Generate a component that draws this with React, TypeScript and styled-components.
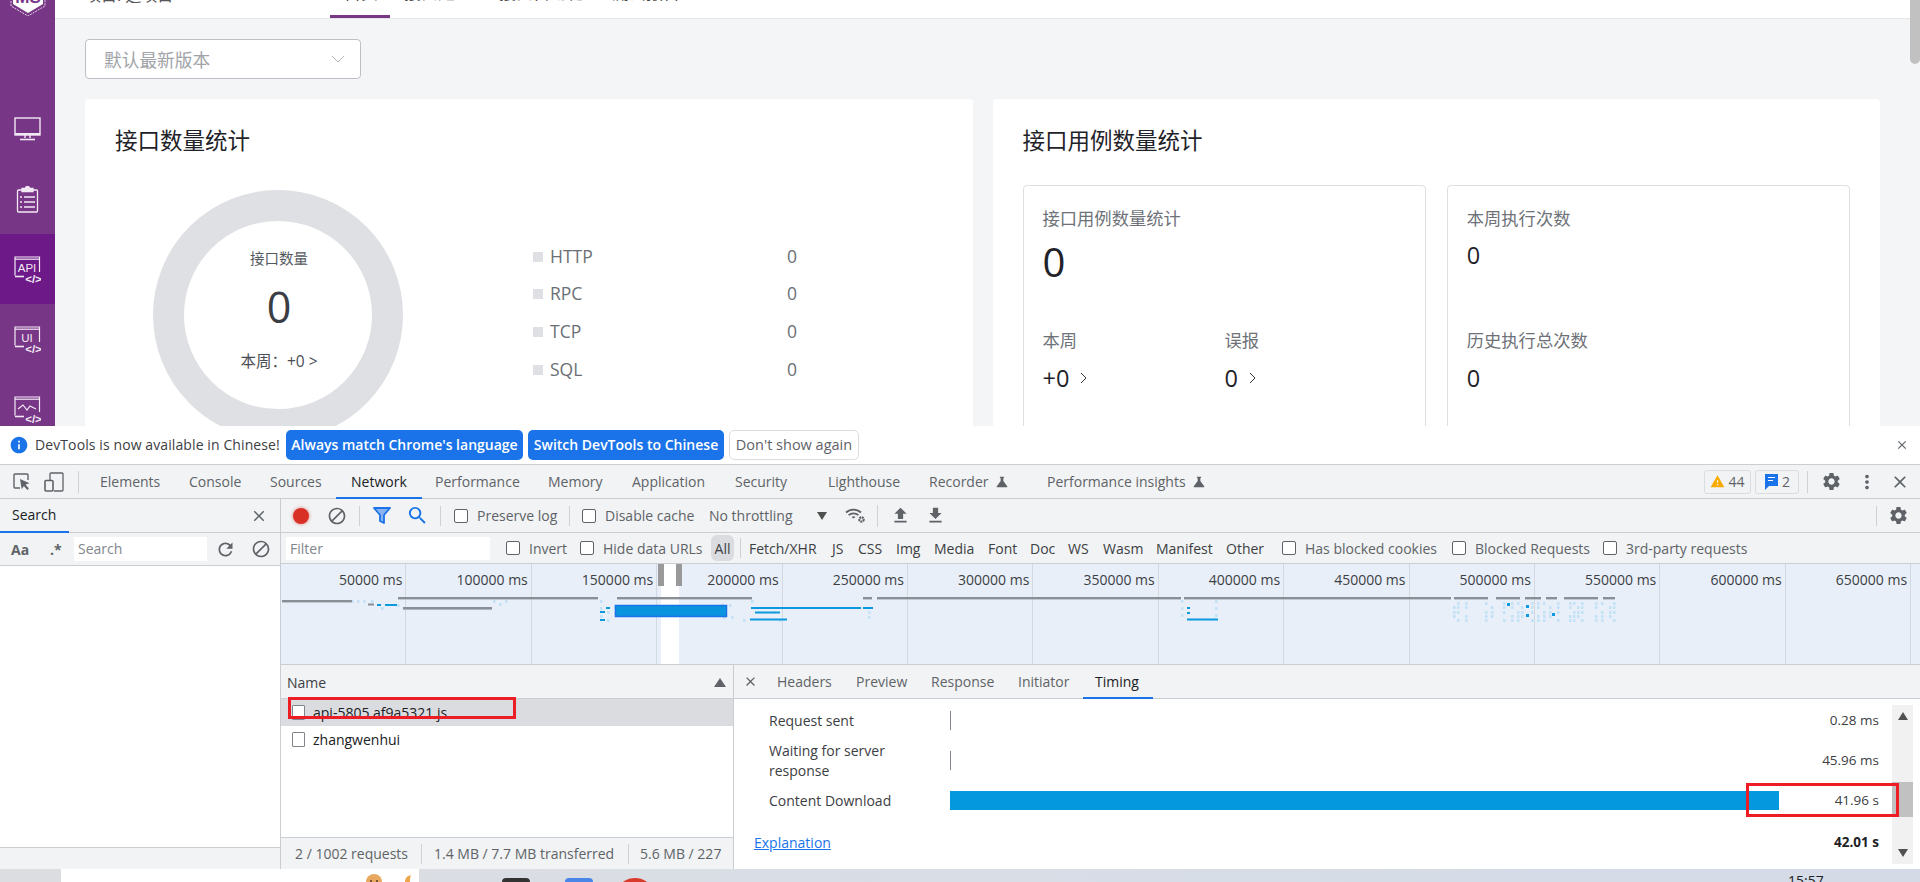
import React from "react";
import styled, { createGlobalStyle } from "styled-components";
import {
  MdBlock,
  MdClose,
  MdFileDownload,
  MdFileUpload,
  MdInfo,
  MdMoreVert,
  MdRefresh,
  MdScience,
  MdSearch,
  MdSettings,
  MdWarning,
} from "react-icons/md";

const Global = createGlobalStyle`
  html, body { margin: 0; padding: 0; height: 100%; overflow: hidden; background: #fff; }
  * { box-sizing: border-box; }
  body { font-family: "Open Sans", "Noto Sans CJK SC", sans-serif; }
`;

const DEV_FONT = `"Open Sans", "Noto Sans", sans-serif`;
const APP_FONT = `"Open Sans", "Noto Sans CJK SC", sans-serif`;
const BORDER = "#cacdd1";
const PANEL = "#f1f3f4";
const DEV_TEXT = "#5f6368";
const BLUE = "#1a73e8";

const Page = styled.div`
  width: 1920px;
  height: 882px;
  display: flex;
  flex-direction: column;
  overflow: hidden;
`;

/* ---------- web app being inspected ---------- */

const AppArea = styled.div`
  height: 426px;
  display: flex;
  overflow: hidden;
  background: #f4f5f7;
  font-family: ${APP_FONT};
`;

const Sidebar = styled.div`
  width: 55px;
  flex: none;
  background: #783686;
  display: flex;
  flex-direction: column;
`;

const LogoSlot = styled.div`
  height: 94px;
  flex: none;
  display: flex;
  justify-content: center;
  overflow: hidden;
`;

const LogoMark = styled.svg`
  margin-top: -44px;
  flex: none;
`;

const SideItem = styled.div<{ $active?: boolean }>`
  height: 70px;
  flex: none;
  display: flex;
  align-items: center;
  justify-content: center;
  background: ${(p) => (p.$active ? "#6d1a88" : "transparent")};
`;

const Main = styled.div`
  flex: 1;
  min-width: 0;
  display: flex;
  flex-direction: column;
`;

const TopBar = styled.div`
  height: 19px;
  flex: none;
  background: #fff;
  border-bottom: 1px solid #e6e6e6;
  display: flex;
  overflow: hidden;
`;

const ProjectName = styled.div`
  margin: -17px 0 0 30px;
  width: 245px;
  height: 24px;
  font-size: 16px;
  line-height: 24px;
  color: #555;
`;

const TopTab = styled.div<{ $w: number; $active?: boolean }>`
  width: ${(p) => p.$w}px;
  height: 18px;
  flex: none;
  position: relative;
  padding-left: 14px;
  font-size: 17px;
  line-height: 24px;
  color: #444;
  & > span { display: block; margin-top: -19px; }
  ${(p) =>
    p.$active &&
    `&::after { content: ""; position: absolute; left: 0; width: 60px; top: 15px; height: 3px; background: #783686; }`}
`;

const Content = styled.div`
  flex: 1;
  padding: 20px 30px 0;
`;

const VersionSelect = styled.div`
  width: 276px;
  height: 40px;
  border: 1px solid #bcbfc4;
  border-radius: 4px;
  background: #fff;
  display: flex;
  align-items: center;
  justify-content: space-between;
  padding: 0 15px 0 18px;
  font-size: 17.7px;
  color: #a0a3a8;
  margin-bottom: 20px;
`;

const Cards = styled.div`
  display: flex;
  gap: 20px;
`;

const Card = styled.div`
  flex: 1;
  height: 480px;
  background: #fff;
  border-radius: 4px;
  padding: 27px 30px 0;
`;

const CardTitle = styled.div`
  height: 30px;
  font-size: 22.5px;
  line-height: 30px;
  color: #1f2329;
`;

const CountRow = styled.div`
  display: flex;
  margin: 34px 0 0 38px;
`;

const Donut = styled.div`
  width: 250px;
  height: 250px;
  flex: none;
  border: 31px solid #dfe0e4;
  border-radius: 50%;
  display: flex;
  flex-direction: column;
  align-items: center;
  padding: 28px 0 0 2px;
`;

const DonutLabel = styled.div`
  font-size: 14.5px;
  line-height: 20px;
  color: #555a60;
`;

const DonutValue = styled.div`
  font-size: 43px;
  line-height: 50px;
  margin-top: 13px;
  color: #3a3e44;
`;

const DonutNote = styled.div`
  font-size: 15.5px;
  line-height: 20px;
  margin-top: 19px;
  color: #4a4e54;
`;

const Legend = styled.div`
  margin: 47px 0 0 130px;
  display: flex;
  flex-direction: column;
`;

const LegendRow = styled.div`
  height: 37.6px;
  display: flex;
  align-items: center;
  font-size: 17.5px;
  color: #6b6f75;
`;

const LegendDot = styled.span`
  width: 10px;
  height: 10px;
  background: #dfe0e4;
  margin: 2px 7px 0 0;
`;

const LegendName = styled.span`
  width: 237px;
`;

const StatGrid = styled.div`
  display: flex;
  gap: 21px;
  margin-top: 29px;
`;

const StatCard = styled.div`
  flex: 1;
  height: 320px;
  border: 1px solid #dcdfe3;
  border-radius: 4px;
  padding: 21px 0 0 19px;
`;

const StatLabel = styled.div<{ $mt?: number }>`
  height: 24px;
  font-size: 17.3px;
  line-height: 24px;
  color: #6e7278;
  margin-top: ${(p) => p.$mt ?? 0}px;
`;

const BigValue = styled.div`
  font-size: 40px;
  line-height: 50px;
  margin-top: 6px;
  color: #1f2329;
`;

const StatValue = styled.div<{ $mt: number }>`
  display: flex;
  align-items: center;
  gap: 11px;
  font-size: 23.5px;
  line-height: 30px;
  margin-top: ${(p) => p.$mt}px;
  color: #1f2329;
`;

const StatSplit = styled.div`
  display: flex;
  margin-top: 42px;
`;

const StatCol = styled.div`
  width: 182px;
`;

const PageScrollbar = styled.div`
  width: 10px;
  flex: none;
  background: #f4f5f7;
  &::before {
    content: "";
    display: block;
    height: 64px;
    background: #c1c1c1;
    border-radius: 0 0 5px 5px;
  }
`;

/* ---------- devtools ---------- */

const DevTools = styled.div`
  flex: 1;
  min-height: 0;
  display: flex;
  flex-direction: column;
  font-family: ${DEV_FONT};
  color: ${DEV_TEXT};
  font-size: 14px;
`;

const InfoBar = styled.div`
  height: 39px;
  flex: none;
  background: #fff;
  border-bottom: 1px solid ${BORDER};
  display: flex;
  align-items: center;
  padding: 0 11px 1px 9px;
  color: #3c4043;
`;

const InfoText = styled.span`
  margin: 0 7px 0 6px;
  width: 244px;
  white-space: nowrap;
  letter-spacing: 0.1px;
`;

const InfoButton = styled.div<{ $w: number; $primary?: boolean }>`
  width: ${(p) => p.$w}px;
  height: 30px;
  margin-right: 5px;
  border-radius: 5px;
  display: flex;
  align-items: center;
  justify-content: center;
  white-space: nowrap;
  font-size: ${(p) => (p.$primary ? 14 : 14.5)}px;
  font-weight: ${(p) => (p.$primary ? 600 : 400)};
  background: ${(p) => (p.$primary ? BLUE : "#fff")};
  color: ${(p) => (p.$primary ? "#fff" : DEV_TEXT)};
  border: ${(p) => (p.$primary ? "none" : "1px solid #dadce0")};
`;

const Row = styled.div<{ $h: number }>`
  height: ${(p) => p.$h}px;
  flex: none;
  background: ${PANEL};
  border-bottom: 1px solid ${BORDER};
  display: flex;
  align-items: center;
  white-space: nowrap;
`;

const ToolIcon = styled.span<{ $w: number; $ml?: number }>`
  width: ${(p) => p.$w}px;
  margin-left: ${(p) => p.$ml ?? 0}px;
  flex: none;
  display: flex;
  align-items: center;
  justify-content: center;
  color: ${DEV_TEXT};
`;

const Sep = styled.span<{ $ml?: number; $h?: number; $auto?: boolean }>`
  width: 1px;
  height: ${(p) => p.$h ?? 20}px;
  flex: none;
  margin-left: ${(p) => (p.$auto ? "auto" : `${p.$ml ?? 0}px`)};
  background: #cfd1d4;
`;

const MainTab = styled.div<{ $w: number; $active?: boolean }>`
  width: ${(p) => p.$w}px;
  flex: none;
  position: relative;
  height: 33px;
  line-height: 33px;
  display: flex;
  align-items: center;
  gap: 5px;
  color: ${(p) => (p.$active ? "#202124" : DEV_TEXT)};
  ${(p) =>
    p.$active &&
    `&::after { content: ""; position: absolute; left: -15px; right: 13px; bottom: -1px; height: 2px; background: ${BLUE}; }`}
`;

const Badge = styled.div<{ $ml?: number; $w: number; $auto?: boolean }>`
  width: ${(p) => p.$w}px;
  height: 24px;
  margin-left: ${(p) => (p.$auto ? "auto" : `${p.$ml ?? 0}px`)};
  border: 1px solid #dadce0;
  border-radius: 3px;
  display: flex;
  align-items: center;
  justify-content: center;
  gap: 3px;
  flex: none;
`;

const Body = styled.div`
  flex: 1;
  min-height: 0;
  display: flex;
`;

const SearchPane = styled.div`
  width: 281px;
  flex: none;
  display: flex;
  flex-direction: column;
  border-right: 1px solid ${BORDER};
`;

const SearchTab = styled.div`
  width: 69px;
  height: 33px;
  line-height: 32px;
  padding-left: 12px;
  color: #202124;
  position: relative;
  &::after {
    content: "";
    position: absolute;
    left: 0;
    right: 0;
    bottom: -1px;
    height: 2px;
    background: ${BLUE};
  }
`;

const SearchOption = styled.span<{ $w: number; $ml: number }>`
  width: ${(p) => p.$w}px;
  margin-left: ${(p) => p.$ml}px;
  flex: none;
  font-weight: 700;
  color: ${DEV_TEXT};
`;

const TextField = styled.div<{ $w: number; $h: number; $ml: number }>`
  width: ${(p) => p.$w}px;
  height: ${(p) => p.$h}px;
  margin-left: ${(p) => p.$ml}px;
  flex: none;
  background: #fff;
  padding-left: 4px;
  color: #80868b;
  line-height: ${(p) => p.$h}px;
`;

const SearchResults = styled.div`
  flex: 1;
  background: #fff;
`;

const PaneFooter = styled.div<{ $h: number }>`
  height: ${(p) => p.$h}px;
  flex: none;
  background: ${PANEL};
  border-top: 1px solid ${BORDER};
  display: flex;
  align-items: center;
`;

const NetPane = styled.div`
  flex: 1;
  min-width: 0;
  display: flex;
  flex-direction: column;
`;

const CheckLabel = styled.label<{ $w: number; $ml?: number }>`
  width: ${(p) => p.$w}px;
  margin-left: ${(p) => p.$ml ?? 0}px;
  flex: none;
  display: flex;
  align-items: center;
  gap: 9px;
  color: ${DEV_TEXT};
`;

const CheckBox = styled.span`
  width: 14px;
  height: 14px;
  flex: none;
  border: 1px solid #5f6368;
  border-radius: 2px;
  background: #fff;
`;

const Plain = styled.span<{ $w: number }>`
  width: ${(p) => p.$w}px;
  flex: none;
`;

const AllPill = styled.span`
  width: 23px;
  height: 26px;
  margin-left: 1px;
  flex: none;
  background: #dadce0;
  border-radius: 6px;
  display: flex;
  align-items: center;
  justify-content: center;
  color: #3c4043;
`;

const TypeChip = styled.span<{ $w: number }>`
  width: ${(p) => p.$w}px;
  flex: none;
  color: #3c4043;
`;

const RecordDot = styled.span`
  width: 16px;
  height: 16px;
  border-radius: 50%;
  background: #d93025;
  box-shadow: 0 0 3px 1px rgba(217, 48, 37, 0.35);
`;

const Overview = styled.div`
  height: 101px;
  flex: none;
  position: relative;
  background: #e8eff9;
  border-bottom: 1px solid ${BORDER};
  display: flex;
  overflow: hidden;
`;

const TimeCell = styled.div`
  width: 125.4px;
  flex: none;
  height: 100%;
  border-right: 1px solid #d3d9e2;
  text-align: right;
  padding-right: 3px;
  font-size: 14px;
  line-height: 32px;
  color: #3c4043;
`;

const SelectionBand = styled.div`
  position: absolute;
  left: 380px;
  width: 18px;
  top: 0;
  bottom: 0;
  background: #fff;
`;

const Grabber = styled.div<{ $x: number }>`
  position: absolute;
  left: ${(p) => p.$x}px;
  top: 0;
  width: 6px;
  height: 22px;
  background: #999;
`;

const ChartLayer = styled.svg`
  position: absolute;
  left: 0;
  top: 0;
`;

const Split = styled.div`
  flex: 1;
  min-height: 0;
  display: flex;
`;

const NamePanel = styled.div`
  width: 453px;
  flex: none;
  position: relative;
  display: flex;
  flex-direction: column;
  border-right: 1px solid ${BORDER};
  background: #fff;
`;

const NameHead = styled.div`
  height: 34px;
  flex: none;
  background: ${PANEL};
  border-bottom: 1px solid ${BORDER};
  display: flex;
  align-items: center;
  justify-content: space-between;
  padding: 2px 7px 0 6px;
  color: #3c4043;
`;

const SortArrow = styled.span`
  width: 0;
  height: 0;
  border-left: 6px solid transparent;
  border-right: 6px solid transparent;
  border-bottom: 9px solid ${DEV_TEXT};
`;

const FileRow = styled.div<{ $selected?: boolean }>`
  height: 27px;
  flex: none;
  display: flex;
  align-items: center;
  gap: 8px;
  padding-left: 11px;
  color: #202124;
  background: ${(p) => (p.$selected ? "#dadce0" : "#fff")};
`;

const FileIcon = styled.span`
  width: 13px;
  height: 15px;
  border: 1.5px solid #80868b;
  border-radius: 1px;
  background: #fff;
`;

const NameList = styled.div`
  flex: 1;
`;

const FootText = styled.span<{ $w: number; $ml: number }>`
  width: ${(p) => p.$w}px;
  margin-left: ${(p) => p.$ml}px;
  flex: none;
  white-space: nowrap;
`;

const RedBox = styled.div<{ $x: number; $y: number; $w: number; $h: number }>`
  position: absolute;
  left: ${(p) => p.$x}px;
  top: ${(p) => p.$y}px;
  width: ${(p) => p.$w}px;
  height: ${(p) => p.$h}px;
  border: 3px solid #ee1c25;
  pointer-events: none;
`;

const DetailPanel = styled.div`
  flex: 1;
  min-width: 0;
  position: relative;
  display: flex;
  flex-direction: column;
  background: #fff;
`;

const DetailTabs = styled.div`
  height: 34px;
  flex: none;
  background: ${PANEL};
  border-bottom: 1px solid ${BORDER};
  display: flex;
  align-items: center;
`;

const DetailTab = styled.span<{ $w: number; $active?: boolean }>`
  width: ${(p) => p.$w}px;
  flex: none;
  position: relative;
  line-height: 32px;
  color: ${(p) => (p.$active ? "#202124" : DEV_TEXT)};
  ${(p) =>
    p.$active &&
    `&::after { content: ""; position: absolute; left: -12px; width: 70px; bottom: -1px; height: 2px; background: ${BLUE}; }`}
`;

const DetailBody = styled.div`
  flex: 1;
  min-height: 0;
  display: flex;
  padding: 6px 7px 5px 0;
`;

const TimingList = styled.div`
  flex: 1;
  min-width: 0;
  padding: 1px 13px 0 35px;
  display: flex;
  flex-direction: column;
`;

const TimingRow = styled.div<{ $h: number; $mt?: number }>`
  height: ${(p) => p.$h}px;
  margin-top: ${(p) => p.$mt ?? 0}px;
  flex: none;
  display: flex;
  align-items: center;
`;

const TimingLabel = styled.div`
  width: 181px;
  flex: none;
  padding-top: 2px;
  font-size: 14px;
  line-height: 20px;
  color: #3c4043;
`;

const TimingTrack = styled.div`
  flex: 1;
  height: 19px;
`;

const TimingBar = styled.div<{ $full?: boolean }>`
  height: 100%;
  width: ${(p) => (p.$full ? "100%" : "1px")};
  background: ${(p) => (p.$full ? "#0499df" : "#80868b")};
`;

const TimingValue = styled.div<{ $bold?: boolean }>`
  width: 100px;
  flex: none;
  text-align: right;
  font-size: 13.5px;
  color: ${(p) => (p.$bold ? "#202124" : "#3c4043")};
  font-weight: ${(p) => (p.$bold ? 700 : 400)};
`;

const ExplainLink = styled.a`
  margin-left: -15px;
  font-size: 14px;
  color: ${BLUE};
  text-decoration: underline;
`;

const RowSpacer = styled.div`
  flex: 1;
`;

const VScroll = styled.div`
  width: 21px;
  flex: none;
  background: #f1f1f1;
  display: flex;
  flex-direction: column;
  align-items: center;
  justify-content: space-between;
  position: relative;
  padding: 7px 0;
  color: #555;
  &::after {
    content: "";
    position: absolute;
    left: 0;
    right: 0;
    top: 77px;
    height: 35px;
    background: #c1c1c1;
  }
`;

const ScrollArrow = styled.span<{ $down?: boolean }>`
  width: 0;
  height: 0;
  border-left: 5px solid transparent;
  border-right: 5px solid transparent;
  ${(p) => (p.$down ? "border-top" : "border-bottom")}: 8px solid #505050;
`;

/* ---------- desktop strip under the browser ---------- */

const Taskbar = styled.div`
  height: 13px;
  flex: none;
  display: flex;
  overflow: hidden;
  background: linear-gradient(90deg, #dcdde0 0%, #d8dde6 50%, #d4dbe7 100%);
  font-family: ${DEV_FONT};
`;

const SearchBox = styled.div`
  width: 358px;
  margin-left: 61px;
  height: 13px;
  flex: none;
  background: #fff;
  display: flex;
  justify-content: flex-end;
  padding: 5px 4px 0 0;
`;

const Tray = styled.span<{ $c: string; $ml: number; $w: number; $round?: boolean }>`
  width: ${(p) => p.$w}px;
  height: 20px;
  margin: 9px 0 0 ${(p) => p.$ml}px;
  flex: none;
  background: ${(p) => p.$c};
  border-radius: ${(p) => (p.$round ? "50%" : "4px")};
`;

const Clock = styled.span`
  margin: 3px 0 0 1138px;
  font-size: 14px;
  line-height: 18px;
  color: #1f2329;
`;

/* ---------- drawings ---------- */

function Logo() {
  return (
    <LogoMark width="38" height="60" viewBox="0 0 38 60">
      <polygon points="19,0 36,10 36,50 19,60 2,50 2,10" fill="none" stroke="#fff" strokeWidth="0.8" strokeDasharray="2 1" />
      <polygon points="19,2 34,11 34,48 19,57 4,48 4,11" fill="#fff" />
      <text x="19" y="47" textAnchor="middle" fontSize="17" fontWeight="700" fontFamily="Liberation Sans" fill="#783686">
        MS
      </text>
    </LogoMark>
  );
}

function MonitorIcon() {
  return (
    <svg width="27" height="24" viewBox="0 0 27 24" fill="none" stroke="#f3e9f5" strokeWidth="1.4">
      <rect x="1" y="1" width="25" height="17" />
      <path d="M1 17h25" strokeWidth="2" />
      <path d="M11 18v3M16 18v3" />
      <path d="M6 22.5h15" strokeWidth="1.6" />
    </svg>
  );
}

function ClipboardIcon() {
  return (
    <svg width="23" height="27" viewBox="0 0 23 27" fill="none" stroke="#f3e9f5" strokeWidth="1.3">
      <path d="M6 4H2.5a1 1 0 0 0-1 1v20a1 1 0 0 0 1 1h18a1 1 0 0 0 1-1V5a1 1 0 0 0-1-1H17" />
      <path d="M6 2.5h3.5a2 2 0 0 1 4 0H17v3H6z" fill="#f3e9f5" />
      <path d="M4 11h2M8 11h11M4 16h2M8 16h11M4 21h2M8 21h11" />
    </svg>
  );
}

function CodeFrame({ children }: { children: React.ReactNode }) {
  return (
    <svg width="27" height="27" viewBox="0 0 27 27" fill="none" stroke="#f3e9f5" strokeWidth="1.2">
      <path d="M1 19.5V1h24.5v15" />
      <path d="M1 3.2h24.5" />
      <path d="M1 20.5h9" strokeWidth="1.6" />
      {children}
      <text x="19.5" y="26.5" textAnchor="middle" fontSize="11.5" fontWeight="700" fontFamily="Liberation Sans" fill="#f3e9f5" stroke="none">
        {"</>"}
      </text>
    </svg>
  );
}

function FrameLabel({ text }: { text: string }) {
  return (
    <text x="13" y="15.5" textAnchor="middle" fontSize="11.5" fontFamily="Liberation Sans" fill="#f3e9f5" stroke="none">
      {text}
    </text>
  );
}

function InspectIcon() {
  return (
    <svg width="18" height="18" viewBox="0 0 18 18" fill="none">
      <path d="M7 15H2a1 1 0 0 1-1-1V2a1 1 0 0 1 1-1h12a1 1 0 0 1 1 1v5" stroke="#5f6368" strokeWidth="1.4" />
      <path d="M7 6l9.5 4.2-4 1.4 3.4 4-1.6 1.4-3.4-4-2.2 3.2z" fill="#5f6368" />
    </svg>
  );
}

function DeviceIcon() {
  return (
    <svg width="20" height="20" viewBox="0 0 20 20" fill="none" stroke="#5f6368" strokeWidth="1.3">
      <path d="M6 8V2a1 1 0 0 1 1-1h11a1 1 0 0 1 1 1v16a1 1 0 0 1-1 1h-8" />
      <rect x="1" y="8.5" width="8" height="10.5" rx="1" strokeWidth="1.6" />
    </svg>
  );
}

function FunnelIcon() {
  return (
    <svg width="18" height="17" viewBox="0 0 18 17">
      <path d="M1 1h16l-6 7v8l-4-2V8z" fill="#8ab4f0" stroke={BLUE} strokeWidth="1.8" strokeLinejoin="round" />
    </svg>
  );
}

function WifiGearIcon() {
  return (
    <svg width="21" height="17" viewBox="0 0 21 17" fill="none" stroke="#5f6368" strokeWidth="1.8">
      <path d="M1 5.5a11 11 0 0 1 15 0M3.6 8.2a7.4 7.4 0 0 1 9.8 0" />
      <path d="M8.5 11.6l-2-1.6a3.2 3.2 0 0 1 4 0z" fill="#5f6368" stroke="none" />
      <circle cx="16.5" cy="12.5" r="2.2" strokeWidth="2.2" strokeDasharray="1.8 0.6" />
    </svg>
  );
}

function MessageIcon() {
  return (
    <svg width="15" height="18" viewBox="0 0 15 18">
      <path d="M1 1h13v12H5l-4 4z" fill={BLUE} />
      <path d="M4 4.5h7M4 7.5h5" stroke="#fff" strokeWidth="1.2" />
    </svg>
  );
}

function PetIcon() {
  return (
    <svg width="52" height="8" viewBox="0 0 52 8">
      <circle cx="11" cy="8" r="8" fill="#e8a860" />
      <circle cx="8" cy="7" r="1" fill="#5a3a20" />
      <circle cx="14" cy="7" r="1" fill="#5a3a20" />
      <path d="M42 8c0-4 2-6 6-7-1 2-1 5-1 7z" fill="#eda64e" />
    </svg>
  );
}

function Chevron() {
  return (
    <svg width="7" height="12" viewBox="0 0 7 12" fill="none" stroke="#333" strokeWidth="1">
      <path d="M1 1l5 5-5 5" />
    </svg>
  );
}

/* ---------- data ---------- */

const mainTabs: [string, number, boolean?][] = [
  ["Elements", 89],
  ["Console", 81],
  ["Sources", 81],
  ["Network", 84],
  ["Performance", 113],
  ["Memory", 84],
  ["Application", 103],
  ["Security", 93],
  ["Lighthouse", 101],
  ["Recorder", 118, true],
  ["Performance insights", 170, true],
];

const resourceTypes: [string, number][] = [
  ["Fetch/XHR", 83],
  ["JS", 26],
  ["CSS", 38],
  ["Img", 38],
  ["Media", 54],
  ["Font", 42],
  ["Doc", 38],
  ["WS", 35],
  ["Wasm", 53],
  ["Manifest", 70],
  ["Other", 56],
];

const timeMarks = Array.from({ length: 13 }, (_, i) => `${(i + 1) * 50000} ms`);

// overview bars, x/w relative to the pane, y relative to its top
const grayBars = [
  [1, 36, 70, 2.4],
  [87, 39.5, 6, 2],
  [117, 33, 200, 2.4],
  [122, 43, 89, 2.6],
  [336, 33, 135, 2.4],
  [582, 33, 9, 2.4],
  [596, 33, 304, 2.4],
  [903, 33, 267, 2.4],
  [1173, 33, 34, 2.4],
  [1215, 33, 24, 2.4],
  [1244, 33, 16, 2.4],
  [1265, 33, 11, 2.4],
  [1283, 33, 34, 2.4],
  [1322, 33, 12, 2.4],
];
const blueBars = [
  [96, 40, 4, 2],
  [104, 40, 12, 2],
  [470, 43, 110, 2],
  [474, 47.5, 25, 2],
  [469, 54.5, 37, 2],
  [906, 54.5, 31, 2],
  [906, 43, 3, 2],
  [906, 48, 3, 2],
  [582, 43, 10, 2],
  [319, 47, 5, 2],
  [319, 55, 5, 2],
  [325, 43, 4, 2],
  [1226, 39, 3, 3],
  [1245, 41, 3, 3],
  [1271, 49, 3, 3],
  [1245, 50, 3, 3],
];
const paleColumns = [
  1172, 1176, 1184, 1204, 1210, 1222, 1230, 1236, 1240, 1250, 1256, 1262, 1268, 1276, 1288, 1292, 1296, 1300, 1314, 1320, 1328, 1332,
];
const paleDots = [
  [70, 36], [76, 36], [82, 36], [90, 36], [116, 40], [100, 43], [212, 36], [218, 39], [224, 36],
  [319, 36], [319, 43], [319, 51], [326, 47], [326, 55], [333, 42], [333, 48],
  [440, 40], [448, 40], [442, 52], [450, 52], [462, 55], [470, 36], [492, 47], [498, 55], [587, 47], [587, 52],
  [900, 36], [900, 43], [900, 50], [934, 36], [934, 43], [934, 50],
  ...paleColumns.flatMap((x, i) => [38, 42, 47, 51, 55].filter((_, j) => (i + j) % 4 !== 0).map((y) => [x, y])),
];

/* ---------- page ---------- */

export default function App() {
  return (
    <Page>
      <Global />
      <AppArea>
        <Sidebar>
          <LogoSlot>
            <Logo />
          </LogoSlot>
          <SideItem>
            <MonitorIcon />
          </SideItem>
          <SideItem>
            <ClipboardIcon />
          </SideItem>
          <SideItem $active>
            <CodeFrame>
              <FrameLabel text="API" />
            </CodeFrame>
          </SideItem>
          <SideItem>
            <CodeFrame>
              <FrameLabel text="UI" />
            </CodeFrame>
          </SideItem>
          <SideItem>
            <CodeFrame>
              <path d="M4 13l5-4 4 5 3-4 6 3" />
            </CodeFrame>
          </SideItem>
        </Sidebar>
        <Main>
          <TopBar>
            <ProjectName>项目: 选项目</ProjectName>
            <TopTab $w={60} $active>
              <span>首页</span>
            </TopTab>
            <TopTab $w={95}>
              <span>接口定义</span>
            </TopTab>
            <TopTab $w={113}>
              <span>接口自动化</span>
            </TopTab>
            <TopTab $w={100}>
              <span>测试报告</span>
            </TopTab>
          </TopBar>
          <Content>
            <VersionSelect>
              默认最新版本
              <svg width="14" height="8" viewBox="0 0 14 8" fill="none" stroke="#b4b7bc" strokeWidth="1">
                <path d="M1 1l6 6 6-6" />
              </svg>
            </VersionSelect>
            <Cards>
              <Card>
                <CardTitle>接口数量统计</CardTitle>
                <CountRow>
                  <Donut>
                    <DonutLabel>接口数量</DonutLabel>
                    <DonutValue>0</DonutValue>
                    <DonutNote>本周：+0 &gt;</DonutNote>
                  </Donut>
                  <Legend>
                    {["HTTP", "RPC", "TCP", "SQL"].map((name) => (
                      <LegendRow key={name}>
                        <LegendDot />
                        <LegendName>{name}</LegendName>0
                      </LegendRow>
                    ))}
                  </Legend>
                </CountRow>
              </Card>
              <Card>
                <CardTitle>接口用例数量统计</CardTitle>
                <StatGrid>
                  <StatCard>
                    <StatLabel>接口用例数量统计</StatLabel>
                    <BigValue>0</BigValue>
                    <StatSplit>
                      <StatCol>
                        <StatLabel>本周</StatLabel>
                        <StatValue $mt={10}>
                          +0
                          <Chevron />
                        </StatValue>
                      </StatCol>
                      <StatCol>
                        <StatLabel>误报</StatLabel>
                        <StatValue $mt={10}>
                          0
                          <Chevron />
                        </StatValue>
                      </StatCol>
                    </StatSplit>
                  </StatCard>
                  <StatCard>
                    <StatLabel>本周执行次数</StatLabel>
                    <StatValue $mt={9}>0</StatValue>
                    <StatLabel $mt={59}>历史执行总次数</StatLabel>
                    <StatValue $mt={10}>0</StatValue>
                  </StatCard>
                </StatGrid>
              </Card>
            </Cards>
          </Content>
        </Main>
        <PageScrollbar />
      </AppArea>

      <DevTools>
        <InfoBar>
          <MdInfo size={20} color={BLUE} />
          <InfoText>DevTools is now available in Chinese!</InfoText>
          <InfoButton $w={237} $primary>
            Always match Chrome&apos;s language
          </InfoButton>
          <InfoButton $w={196} $primary>
            Switch DevTools to Chinese
          </InfoButton>
          <InfoButton $w={130}>Don&apos;t show again</InfoButton>
          <RowSpacer />
          <MdClose size={14} color="#5f6368" />
        </InfoBar>

        <Row $h={34}>
          <ToolIcon $w={43}>
            <InspectIcon />
          </ToolIcon>
          <ToolIcon $w={22}>
            <DeviceIcon />
          </ToolIcon>
          <Sep $ml={13} $h={22} />
          <Plain $w={21} />
          {mainTabs.map(([name, w, flask]) => (
            <MainTab key={name} $w={w} $active={name === "Network"}>
              {name}
              {flask && <MdScience size={16} color="#5f6368" />}
            </MainTab>
          ))}
          <Badge $w={47} $auto>
            <MdWarning size={15} color="#f9ab00" />
            44
          </Badge>
          <Badge $w={44} $ml={4}>
            <MessageIcon />2
          </Badge>
          <Sep $ml={8} $h={22} />
          <ToolIcon $w={46}>
            <MdSettings size={21} />
          </ToolIcon>
          <ToolIcon $w={26}>
            <MdMoreVert size={22} />
          </ToolIcon>
          <ToolIcon $w={40}>
            <MdClose size={20} />
          </ToolIcon>
        </Row>

        <Body>
          <SearchPane>
            <Row $h={34}>
              <SearchTab>Search</SearchTab>
              <RowSpacer />
              <ToolIcon $w={42}>
                <MdClose size={18} />
              </ToolIcon>
            </Row>
            <Row $h={33}>
              <SearchOption $w={39} $ml={11}>
                Aa
              </SearchOption>
              <SearchOption $w={24} $ml={0}>
                .*
              </SearchOption>
              <TextField $w={133} $h={24} $ml={0}>
                Search
              </TextField>
              <ToolIcon $w={36}>
                <MdRefresh size={21} />
              </ToolIcon>
              <ToolIcon $w={36}>
                <MdBlock size={20} />
              </ToolIcon>
            </Row>
            <SearchResults />
            <PaneFooter $h={22} />
          </SearchPane>

          <NetPane>
            <Row $h={34}>
              <ToolIcon $w={40}>
                <RecordDot />
              </ToolIcon>
              <ToolIcon $w={32}>
                <MdBlock size={20} />
              </ToolIcon>
              <Sep $ml={6} />
              <ToolIcon $w={34} $ml={5}>
                <FunnelIcon />
              </ToolIcon>
              <ToolIcon $w={36}>
                <MdSearch size={23} color={BLUE} />
              </ToolIcon>
              <Sep $ml={5} />
              <CheckLabel $w={115} $ml={13}>
                <CheckBox />
                Preserve log
              </CheckLabel>
              <Sep />
              <CheckLabel $w={127} $ml={12}>
                <CheckBox />
                Disable cache
              </CheckLabel>
              <Plain $w={107}>No throttling</Plain>
              <ToolIcon $w={12}>
                <ScrollArrow $down />
              </ToolIcon>
              <ToolIcon $w={21} $ml={17}>
                <WifiGearIcon />
              </ToolIcon>
              <Sep $ml={11} $h={22} />
              <ToolIcon $w={22} $ml={11}>
                <MdFileUpload size={21} />
              </ToolIcon>
              <ToolIcon $w={22} $ml={13}>
                <MdFileDownload size={21} />
              </ToolIcon>
              <Sep $auto />
              <ToolIcon $w={43}>
                <MdSettings size={21} />
              </ToolIcon>
            </Row>
            <Row $h={31}>
              <TextField $w={204} $h={23} $ml={5}>
                Filter
              </TextField>
              <CheckLabel $w={74} $ml={16}>
                <CheckBox />
                Invert
              </CheckLabel>
              <CheckLabel $w={130}>
                <CheckBox />
                Hide data URLs
              </CheckLabel>
              <AllPill>All</AllPill>
              <Sep $ml={6} $h={20} />
              <Plain $w={8} />
              {resourceTypes.map(([name, w]) => (
                <TypeChip key={name} $w={w}>
                  {name}
                </TypeChip>
              ))}
              <CheckLabel $w={170}>
                <CheckBox />
                Has blocked cookies
              </CheckLabel>
              <CheckLabel $w={151}>
                <CheckBox />
                Blocked Requests
              </CheckLabel>
              <CheckLabel $w={160}>
                <CheckBox />
                3rd-party requests
              </CheckLabel>
            </Row>
            <Overview>
              {timeMarks.map((mark) => (
                <TimeCell key={mark}>{mark}</TimeCell>
              ))}
              <SelectionBand />
              <Grabber $x={377} />
              <Grabber $x={395} />
              <ChartLayer width="1639" height="100" viewBox="0 0 1639 100">
                {paleDots.map(([x, y], i) => (
                  <rect key={i} x={x} y={y} width="2.5" height="3" fill="#c4e2f6" />
                ))}
                {grayBars.map(([x, y, w, h], i) => (
                  <rect key={i} x={x} y={y} width={w} height={h} fill="#8a8f96" />
                ))}
                {blueBars.map(([x, y, w, h], i) => (
                  <rect key={i} x={x} y={y} width={w} height={h} fill="#0b9ae0" />
                ))}
                <rect x="334.5" y="41.5" width="111" height="11" fill="#0a94de" stroke={BLUE} strokeWidth="1.5" />
              </ChartLayer>
            </Overview>
            <Split>
              <NamePanel>
                <NameHead>
                  Name
                  <SortArrow />
                </NameHead>
                <FileRow $selected>
                  <FileIcon />
                  api-5805.af9a5321.js
                </FileRow>
                <FileRow>
                  <FileIcon />
                  zhangwenhui
                </FileRow>
                <NameList />
                <PaneFooter $h={32}>
                  <FootText $w={126} $ml={14}>
                    2 / 1002 requests
                  </FootText>
                  <Sep />
                  <FootText $w={194} $ml={12}>
                    1.4 MB / 7.7 MB transferred
                  </FootText>
                  <Sep />
                  <FootText $w={90} $ml={11}>
                    5.6 MB / 227
                  </FootText>
                </PaneFooter>
                <RedBox $x={7} $y={32} $w={228} $h={22} />
              </NamePanel>
              <DetailPanel>
                <DetailTabs>
                  <ToolIcon $w={33}>
                    <MdClose size={15} />
                  </ToolIcon>
                  <Plain $w={10} />
                  <DetailTab $w={79}>Headers</DetailTab>
                  <DetailTab $w={75}>Preview</DetailTab>
                  <DetailTab $w={87}>Response</DetailTab>
                  <DetailTab $w={77}>Initiator</DetailTab>
                  <DetailTab $w={60} $active>
                    Timing
                  </DetailTab>
                </DetailTabs>
                <DetailBody>
                  <TimingList>
                    <TimingRow $h={28}>
                      <TimingLabel>Request sent</TimingLabel>
                      <TimingTrack>
                        <TimingBar />
                      </TimingTrack>
                      <TimingValue>0.28 ms</TimingValue>
                    </TimingRow>
                    <TimingRow $h={40} $mt={6}>
                      <TimingLabel>
                        Waiting for server
                        <br />
                        response
                      </TimingLabel>
                      <TimingTrack>
                        <TimingBar />
                      </TimingTrack>
                      <TimingValue>45.96 ms</TimingValue>
                    </TimingRow>
                    <TimingRow $h={28} $mt={6}>
                      <TimingLabel>Content Download</TimingLabel>
                      <TimingTrack>
                        <TimingBar $full />
                      </TimingTrack>
                      <TimingValue>41.96 s</TimingValue>
                    </TimingRow>
                    <TimingRow $h={28} $mt={14}>
                      <ExplainLink>Explanation</ExplainLink>
                      <RowSpacer />
                      <TimingValue $bold>42.01 s</TimingValue>
                    </TimingRow>
                  </TimingList>
                  <VScroll>
                    <ScrollArrow />
                    <ScrollArrow $down />
                  </VScroll>
                </DetailBody>
                <RedBox $x={1012} $y={118} $w={153} $h={34} />
              </DetailPanel>
            </Split>
          </NetPane>
        </Body>
      </DevTools>

      <Taskbar>
        <SearchBox>
          <PetIcon />
        </SearchBox>
        <Tray $c="#333" $ml={83} $w={28} />
        <Tray $c="#4a85e8" $ml={35} $w={28} />
        <Tray $c="#d93a2b" $ml={27} $w={30} $round />
        <Clock>15:57</Clock>
      </Taskbar>
    </Page>
  );
}
